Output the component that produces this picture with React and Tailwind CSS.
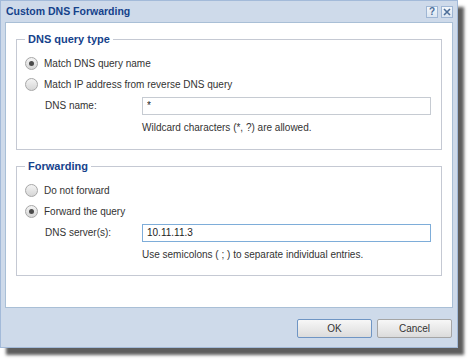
import React, { useState } from 'react';

const font = { fontFamily: '"Liberation Sans", Arial, sans-serif' };

const Radio = ({ checked, label, onClick }) => (
  <div className="flex items-center h-[21px] cursor-default" onClick={onClick}>
    <span className="w-[13px] h-[13px] rounded-full border border-[#a7a7a7] bg-gradient-to-b from-[#f4f4f4] to-[#d6d6d6] flex items-center justify-center">
      {checked && <span className="w-[5px] h-[5px] rounded-full bg-[#4a4a4a]"></span>}
    </span>
    <span className="ml-[6px] text-[10px] text-[#333]">{label}</span>
  </div>
);

const Field = ({ label, value, focused }) => (
  <div className="flex items-center h-[21px] pl-[20px]">
    <span className="w-[97px] text-[10px] text-[#333]">{label}</span>
    <input
      readOnly
      value={value}
      className={`h-[18px] flex-1 border px-[4px] text-[10px] text-[#222] bg-white outline-none ${
        focused ? 'border-[#7eadd9]' : 'border-[#c6cbd2]'
      }`}
    />
  </div>
);

const Hint = ({ children }) => (
  <div className="h-[22px] pl-[117px] flex items-center text-[10px] text-[#333]">{children}</div>
);

const App = () => {
  const [queryType, setQueryType] = useState('name');
  const [forward, setForward] = useState('yes');

  return (
    <div className="w-[474px] h-[363px] bg-white" style={font}>
      <div className="w-[458px] h-[348px] bg-[#cedaea] border border-[#a3bad9] flex flex-col shadow-[6px_7px_3px_rgba(40,40,40,0.75)]">
        <div className="h-[21px] flex items-center justify-between pl-[5px] pr-[4px]">
          <span className="text-[10.5px] font-bold text-[#15428b]">Custom DNS Forwarding</span>
          <div className="flex gap-[3px] mt-[1px]">
            <span className="w-[12px] h-[12px] border border-[#9fb6d4] bg-gradient-to-b from-[#f3f7fb] to-[#dbe5f1] text-[10px] font-bold text-[#4d6e99] flex items-center justify-center leading-none">?</span>
            <span className="w-[12px] h-[12px] border border-[#9fb6d4] bg-gradient-to-b from-[#f3f7fb] to-[#dbe5f1] flex items-center justify-center">
              <svg width="8" height="8" viewBox="0 0 8 8">
                <path d="M1 1L7 7M7 1L1 7" stroke="#4d6e99" strokeWidth="1.6" />
              </svg>
            </span>
          </div>
        </div>
        <div className="mx-[4px] h-[286px] bg-white border border-[#a9bfd6] px-[10px] pt-[9px]">
          <fieldset className="border border-[#c5c9d3] pl-[8px] pr-[10px] pb-[11px]">
            <legend className="px-[3px] text-[11px] font-bold text-[#15428b] leading-[15px]">DNS query type</legend>
            <div className="pt-[6px]">
              <Radio checked={queryType === 'name'} label="Match DNS query name" onClick={() => setQueryType('name')} />
              <Radio checked={queryType === 'ip'} label="Match IP address from reverse DNS query" onClick={() => setQueryType('ip')} />
              <Field label="DNS name:" value="*" />
              <Hint>Wildcard characters (*, ?) are allowed.</Hint>
            </div>
          </fieldset>
          <fieldset className="mt-[9px] border border-[#c5c9d3] pl-[8px] pr-[10px] pb-[10px]">
            <legend className="px-[3px] text-[11px] font-bold text-[#15428b] leading-[15px]">Forwarding</legend>
            <div className="pt-[6px]">
              <Radio checked={forward === 'no'} label="Do not forward" onClick={() => setForward('no')} />
              <Radio checked={forward === 'yes'} label="Forward the query" onClick={() => setForward('yes')} />
              <Field label="DNS server(s):" value="10.11.11.3" focused />
              <Hint>Use semicolons ( ; ) to separate individual entries.</Hint>
            </div>
          </fieldset>
        </div>
        <div className="flex-1 flex items-center justify-end gap-[5px] pr-[5px] pt-[2px]">
          <button className="w-[75px] h-[19px] border border-[#6f95c4] rounded-[2px] bg-gradient-to-b from-[#f7f7f7] to-[#dcdcdc] text-[10px] text-[#333]">OK</button>
          <button className="w-[75px] h-[19px] border border-[#a5a5a5] rounded-[2px] bg-gradient-to-b from-[#f7f7f7] to-[#dcdcdc] text-[10px] text-[#333]">Cancel</button>
        </div>
      </div>
    </div>
  );
};

export default App;
